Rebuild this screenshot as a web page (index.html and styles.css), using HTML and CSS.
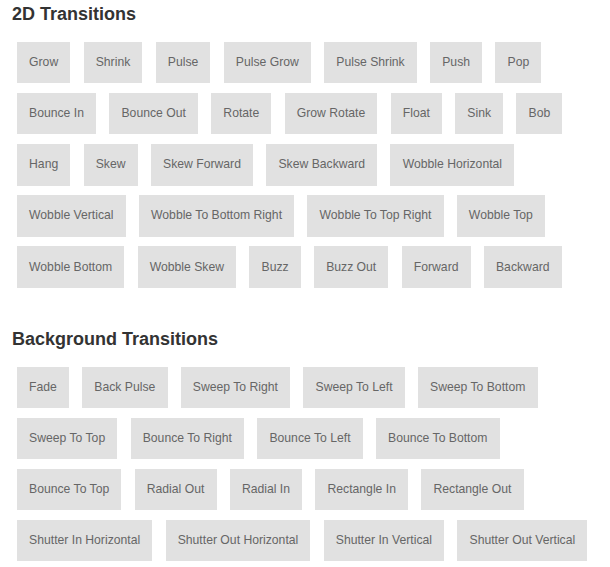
FILE: index.html
```html
<!DOCTYPE html>
<html>
<head>
<title>Hover Effects</title>
<link rel="stylesheet" href="styles.css">
</head>
<body>

<div class="effects">
<h2>2D Transitions</h2>
<a class="button" href="#">Grow</a>
<a class="button" href="#">Shrink</a>
<a class="button" href="#">Pulse</a>
<a class="button" href="#">Pulse Grow</a>
<a class="button" href="#">Pulse Shrink</a>
<a class="button" href="#">Push</a>
<a class="button" href="#">Pop</a>
<a class="button" href="#">Bounce In</a>
<a class="button" href="#">Bounce Out</a>
<a class="button" href="#">Rotate</a>
<a class="button" href="#">Grow Rotate</a>
<a class="button" href="#">Float</a>
<a class="button" href="#">Sink</a>
<a class="button" href="#">Bob</a>
<a class="button" href="#">Hang</a>
<a class="button" href="#">Skew</a>
<a class="button" href="#">Skew Forward</a>
<a class="button" href="#">Skew Backward</a>
<a class="button" href="#">Wobble Horizontal</a>
<a class="button" href="#">Wobble Vertical</a>
<a class="button" href="#">Wobble To Bottom Right</a>
<a class="button" href="#">Wobble To Top Right</a>
<a class="button" href="#">Wobble Top</a>
<a class="button" href="#">Wobble Bottom</a>
<a class="button" href="#">Wobble Skew</a>
<a class="button" href="#">Buzz</a>
<a class="button" href="#">Buzz Out</a>
<a class="button" href="#">Forward</a>
<a class="button" href="#">Backward</a>
</div>

<div class="effects">
<h2>Background Transitions</h2>
<a class="button" href="#">Fade</a>
<a class="button" href="#">Back Pulse</a>
<a class="button" href="#">Sweep To Right</a>
<a class="button" href="#">Sweep To Left</a>
<a class="button" href="#">Sweep To Bottom</a>
<a class="button" href="#">Sweep To Top</a>
<a class="button" href="#">Bounce To Right</a>
<a class="button" href="#">Bounce To Left</a>
<a class="button" href="#">Bounce To Bottom</a>
<a class="button" href="#">Bounce To Top</a>
<a class="button" href="#">Radial Out</a>
<a class="button" href="#">Radial In</a>
<a class="button" href="#">Rectangle In</a>
<a class="button" href="#">Rectangle Out</a>
<a class="button" href="#">Shutter In Horizontal</a>
<a class="button" href="#">Shutter Out Horizontal</a>
<a class="button" href="#">Shutter In Vertical</a>
<a class="button" href="#">Shutter Out Vertical</a>
</div>

</body>
</html>
```
FILE: styles.css
```css
body{
margin:0;
padding:0 12px;
background-color:white;
font-family:"Liberation Sans", Arial, sans-serif;
font-size:12.2px;
line-height:17px;
color:#666;
}

h2{
font-size:18px;
line-height:20px;
font-weight:bold;
color:#333;
margin:4px 0 13px 0;
}

.effects{
margin-bottom:36px;
}

.button{
display:inline-block;
vertical-align:middle;
margin:.4em;
padding:1em;
background:#e1e1e1;
color:#666;
text-decoration:none;
}
```
